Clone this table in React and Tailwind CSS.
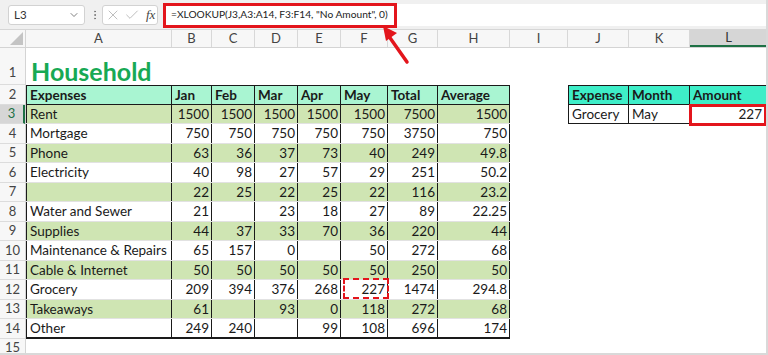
import { ChevronDown, EllipsisVertical, X, Check } from 'lucide-react'

const COLS = [
  { key: 'A', w: 146 },
  { key: 'B', w: 40 },
  { key: 'C', w: 43 },
  { key: 'D', w: 43 },
  { key: 'E', w: 43 },
  { key: 'F', w: 47 },
  { key: 'G', w: 50 },
  { key: 'H', w: 72 },
  { key: 'I', w: 58 },
  { key: 'J', w: 61 },
  { key: 'K', w: 61 },
  { key: 'L', w: 78 },
]

const HEAD = ['Expenses', 'Jan', 'Feb', 'Mar', 'Apr', 'May', 'Total', 'Average']

const ROWS = [
  ['Rent', 1500, 1500, 1500, 1500, 1500, 7500, 1500],
  ['Mortgage', 750, 750, 750, 750, 750, 3750, 750],
  ['Phone', 63, 36, 37, 73, 40, 249, 49.8],
  ['Electricity', 40, 98, 27, 57, 29, 251, 50.2],
  ['', 22, 25, 22, 25, 22, 116, 23.2],
  ['Water and Sewer', 21, '', 23, 18, 27, 89, 22.25],
  ['Supplies', 44, 37, 33, 70, 36, 220, 44],
  ['Maintenance & Repairs', 65, 157, 0, '', 50, 272, 68],
  ['Cable & Internet', 50, 50, 50, 50, 50, 250, 50],
  ['Grocery', 209, 394, 376, 268, 227, 1474, 294.8],
  ['Takeaways', 61, '', 93, 0, 118, 272, 68],
  ['Other', 249, 240, '', 99, 108, 696, 174],
]

const font = { fontFamily: 'Lato, "Open Sans", sans-serif' }

function FormulaBar() {
  return (
    <div className="relative flex h-[30px] items-center bg-[#f0f0f0] border-b border-[#d6d6d6]">
      <div className="ml-[8px] flex h-[20px] w-[77px] items-center justify-between rounded-[3px] border border-[#d2d2d2] bg-white pl-[5px] pr-[4px] text-[11.5px] text-[#333]">
        <span>L3</span>
        <ChevronDown size={12} strokeWidth={1.5} className="text-[#555]" />
      </div>
      <div className="ml-[2px] flex w-[15px] justify-center text-[#777]">
        <EllipsisVertical size={12} strokeWidth={2} />
      </div>
      <div className="flex h-[20px] w-[56px] items-center gap-[3px] rounded-[3px] border border-[#d2d2d2] bg-white pl-[2px]">
        <X size={16} strokeWidth={1.3} className="text-[#b4b4b4]" />
        <Check size={16} strokeWidth={1.3} className="text-[#b4b4b4]" />
        <span className="ml-[3px] text-[13px] italic text-[#444]" style={{ fontFamily: '"Liberation Serif", serif' }}>
          fx
        </span>
      </div>
      <div className="ml-[5px] flex h-[22px] flex-1 items-center bg-white pl-[8px] text-[10.2px] text-[#222]">
        =XLOOKUP(J3,A3:A14, F3:F14, "No Amount", 0)
      </div>
    </div>
  )
}

function ColumnHeader() {
  return (
    <div className="flex h-[18px] bg-[#f7f7f7] border-b border-[#d4d4d4] text-[13px] text-[#444]">
      <div className="flex w-[26px] items-end justify-end border-r border-[#d4d4d4] pb-[2px] pr-[2px]">
        <svg width="13" height="13" viewBox="0 0 13 13">
          <polygon points="13,0 13,13 0,13" fill="#c4c4c4" />
        </svg>
      </div>
      {COLS.map((c) => (
        <div
          key={c.key}
          className={`flex items-center justify-center border-r border-[#d8d8d8] ${
            c.key === 'L' ? 'bg-[#d6d6d6] border-b-2 border-b-[#1e7145] text-[#333]' : ''
          }`}
          style={{ width: c.w }}
        >
          {c.key}
        </div>
      ))}
    </div>
  )
}

function RowHeaders() {
  const nums = Array.from({ length: 13 }, (_, i) => i + 2)
  return (
    <div className="flex w-[26px] flex-col bg-[#f7f7f7] border-r border-[#d4d4d4] text-[13px] text-[#444]">
      <div className="flex h-[37px] items-end justify-center border-b border-[#dcdcdc] pb-[2px]">1</div>
      {nums.map((n) => (
        <div
          key={n}
          className={`flex h-[19.5px] items-center justify-center border-b border-[#dcdcdc] ${
            n === 3 ? 'bg-[#d6d6d6] border-r-2 border-r-[#1e7145] text-[#1e7145]' : ''
          }`}
        >
          {n}
        </div>
      ))}
      <div className="flex h-[18px] items-center justify-center">15</div>
    </div>
  )
}

function MainTable() {
  return (
    <div className="flex flex-col">
      <div className="flex h-[19.5px] bg-[#a9f5d2] border-y-[1.5px] border-[#1a1a1a] font-bold">
        {HEAD.map((h, i) => (
          <div
            key={h}
            className={`flex items-center pl-[3px] border-r-[1.5px] border-[#1a1a1a] ${i === 0 ? 'border-l-[1.5px]' : ''}`}
            style={{ width: COLS[i].w }}
          >
            {h}
          </div>
        ))}
      </div>
      {ROWS.map((r, ri) => (
        <div
          key={ri}
          className={`flex h-[19.5px] ${ri % 2 === 0 ? 'bg-[#cfe5b3]' : 'bg-white'} ${
            ri === ROWS.length - 1 ? 'border-b-2 border-[#1a1a1a]' : 'border-b border-[#e2e2e2]'
          }`}
        >
          {r.map((v, i) => (
            <div
              key={i}
              className={`flex items-center border-r-[1.5px] border-[#1a1a1a] ${
                i === 0 ? 'border-l-[1.5px] pl-[3px]' : 'justify-end pr-[2px]'
              }`}
              style={{ width: COLS[i].w }}
            >
              {v}
            </div>
          ))}
        </div>
      ))}
    </div>
  )
}

function LookupTable() {
  return (
    <div className="flex flex-col">
      <div className="flex h-[19.5px] bg-[#3eeec8] border-y-[1.5px] border-[#1a1a1a] font-bold">
        <div className="flex w-[61px] items-center border-x-[1.5px] border-[#1a1a1a] pl-[3px]">Expense</div>
        <div className="flex w-[61px] items-center border-r-[1.5px] border-[#1a1a1a] pl-[3px]">Month</div>
        <div className="flex w-[77px] items-center border-r-[1.5px] border-[#1a1a1a] pl-[3px]">Amount</div>
      </div>
      <div className="flex h-[19.5px] bg-white border-b-[1.5px] border-[#1a1a1a]">
        <div className="flex w-[61px] items-center border-x-[1.5px] border-[#1a1a1a] pl-[3px]">Grocery</div>
        <div className="flex w-[61px] items-center border-r-[1.5px] border-[#1a1a1a] pl-[3px]">May</div>
        <div className="flex w-[77px] items-center justify-end border-r-[1.5px] border-[#1a1a1a] pr-[4px]">227</div>
      </div>
    </div>
  )
}

export default function App() {
  return (
    <div className="relative h-[355px] w-[768px] overflow-hidden bg-white text-[13.5px] text-[#1a1a1a]" style={font}>
      <FormulaBar />
      <ColumnHeader />
      <div className="flex">
        <RowHeaders />
        <div className="flex flex-col">
          <div className="flex h-[37px] items-end pb-[1px] pl-[5px] text-[25px] font-bold leading-none text-[#17a954]">
            Household
          </div>
          <div className="flex items-start">
            <MainTable />
            <div className="w-[58px]" />
            <LookupTable />
          </div>
        </div>
      </div>

      {/* annotations */}
      <div className="absolute left-[163px] top-[3px] h-[25px] w-[234px] border-[3px] border-[#e3151c]" />
      <div className="absolute left-[689px] top-[104px] h-[22px] w-[78px] border-[3px] border-[#e3151c]" />
      <div className="absolute left-[343px] top-[278px] h-[21px] w-[46px] border-[2.5px] border-dashed border-[#e3151c]" />
      <svg className="absolute left-[378px] top-[22px]" width="36" height="44" viewBox="0 0 36 44">
        <line x1="29" y1="40" x2="10" y2="13" stroke="#e3151c" strokeWidth="3.5" strokeLinecap="round" />
        <polygon points="5,4 19,11 8,19" fill="#e3151c" />
      </svg>
      <div className="absolute bottom-0 left-0 h-[2px] w-full bg-[#d9d9d9]" />
      <div className="absolute right-0 top-0 h-full w-[2px] bg-[#d9d9d9]" />
    </div>
  )
}
